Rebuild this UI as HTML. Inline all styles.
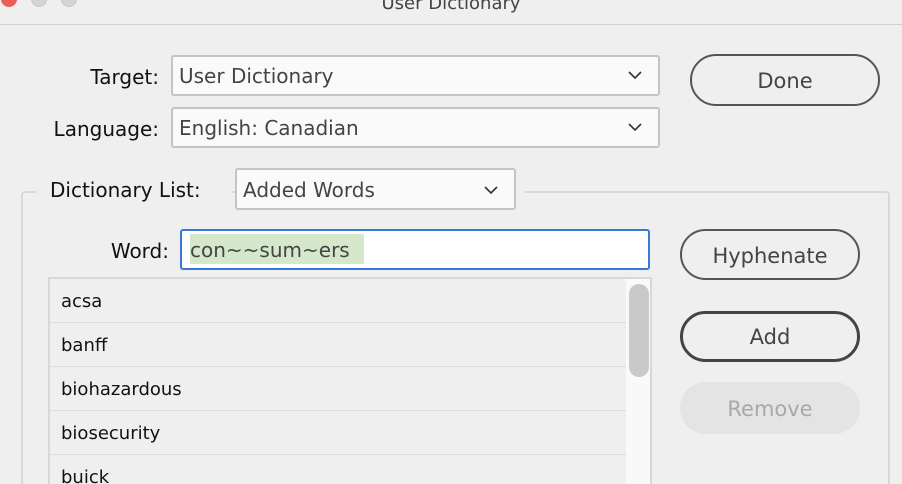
<!DOCTYPE html>
<html><head><style>
html,body{margin:0;width:902px;height:484px;overflow:hidden}
body{background:#efefef;font-family:"DejaVu Sans","Liberation Sans",sans-serif;position:relative}
.a{position:absolute}
.lbl{font-size:20px;color:#111;text-align:right}
.dd{background:#fafafa;border:2px solid #c4c4c4;border-radius:3px;box-sizing:border-box;font-size:20px;color:#444;padding-left:6px;line-height:38px}
.chev{position:absolute;right:16px;top:14px}
.btn{box-sizing:border-box;border:2px solid #555;border-radius:26px;text-align:center;font-size:21px;color:#444}
.row{position:absolute;left:0;width:577px;height:43px;border-bottom:1px solid #dcdcdc;font-size:18px;color:#111;line-height:46px;padding-left:11px;box-sizing:content-box}
</style></head><body>
<div class="a" style="left:0;top:0;width:902px;height:24px;border-bottom:1px solid #d0d0d0"></div>
<div class="a" style="left:1px;top:-9px;width:16px;height:16px;border-radius:50%;background:#ec5f57"></div>
<div class="a" style="left:31px;top:-9px;width:16px;height:16px;border-radius:50%;background:#d4d4d4;border:1px solid #c6c6c6;box-sizing:border-box"></div>
<div class="a" style="left:61px;top:-9px;width:16px;height:16px;border-radius:50%;background:#d4d4d4;border:1px solid #c6c6c6;box-sizing:border-box"></div>
<div class="a" style="left:0;width:902px;top:-7px;text-align:center;font-size:18px;color:#444">User Dictionary</div>

<div class="a lbl" style="right:743px;top:65px">Target:</div>
<div class="a dd" style="left:171px;top:55px;width:489px;height:41px">User Dictionary<svg class="chev" width="14" height="9"><path d="M1 1L7 7L13 1" fill="none" stroke="#333" stroke-width="1.6"/></svg></div>
<div class="a lbl" style="right:743px;top:117px">Language:</div>
<div class="a dd" style="left:171px;top:107px;width:489px;height:41px">English: Canadian<svg class="chev" width="14" height="9"><path d="M1 1L7 7L13 1" fill="none" stroke="#333" stroke-width="1.6"/></svg></div>
<div class="a btn" style="left:690px;top:54px;width:190px;height:52px;line-height:50px;font-size:21px">Done</div>

<div class="a" style="left:21px;top:191px;width:869px;height:293px;border:2px solid #d8d8d8;border-bottom:none;border-radius:4px 4px 0 0;box-sizing:border-box"></div>
<div class="a" style="left:36px;top:180px;width:196px;height:24px;background:#efefef"></div>
<div class="a" style="left:515px;top:180px;width:10px;height:24px;background:#efefef"></div>
<div class="a lbl" style="left:50px;top:178px">Dictionary List:</div>
<div class="a dd" style="left:235px;top:168px;width:281px;height:42px;line-height:40px">Added Words<svg class="chev" width="14" height="9" style="top:16px"><path d="M1 1L7 7L13 1" fill="none" stroke="#333" stroke-width="1.6"/></svg></div>

<div class="a lbl" style="right:733px;top:239px">Word:</div>
<div class="a" style="left:180px;top:229px;width:470px;height:41px;border:2px solid #3a78d8;border-radius:3px;background:#fff;box-sizing:border-box"></div>
<div class="a" style="left:190px;top:234px;width:174px;height:30px;background:#d5e8cc;font-size:20px;color:#444;line-height:32px">con~~sum~ers</div>

<div class="a" style="left:48px;top:277px;width:604px;height:207px;border:2px solid #d8d8d8;border-bottom:none;box-sizing:border-box;background:#efefef;overflow:hidden">
<div class="row" style="top:0">acsa</div>
<div class="row" style="top:44px">banff</div>
<div class="row" style="top:88px">biohazardous</div>
<div class="row" style="top:132px">biosecurity</div>
<div class="row" style="top:176px">buick</div>
<div class="a" style="left:576px;top:0;width:26px;height:207px;background:#f9f9f9"></div>
<div class="a" style="left:579px;top:5px;width:20px;height:93px;border-radius:10px;background:#c9c9c9"></div>
</div>

<div class="a btn" style="left:680px;top:229px;width:180px;height:51px;line-height:50px">Hyphenate</div>
<div class="a btn" style="left:680px;top:311px;width:180px;height:51px;line-height:47px;border:3px solid #444">Add</div>
<div class="a btn" style="left:680px;top:382px;width:180px;height:52px;line-height:54px;border:none;background:#e4e4e4;color:#a8a8a8">Remove</div>
</body></html>
